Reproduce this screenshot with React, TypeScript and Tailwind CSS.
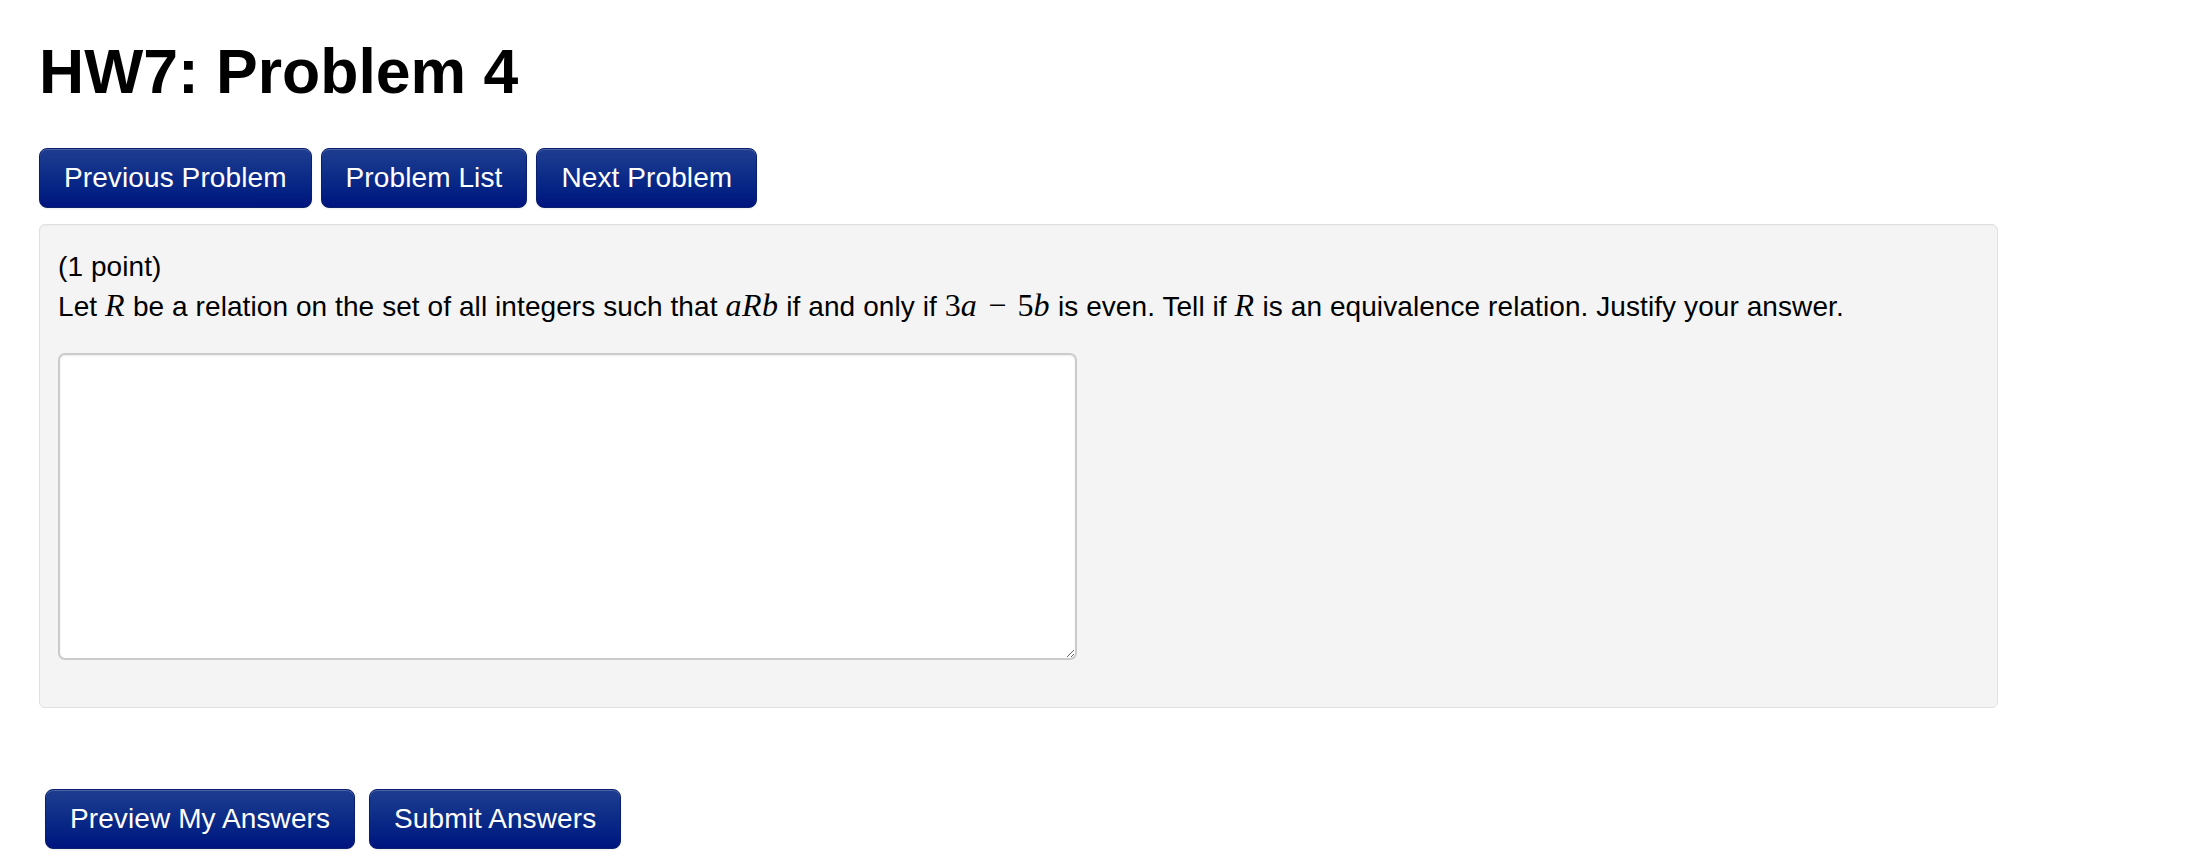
import React from 'react';

const btn =
  'rounded-[8px] border border-[#0b1f6e] bg-gradient-to-b from-[#1e3d90] to-[#00137f] px-6 py-[9px] text-[28px] leading-[40px] tracking-[0.1px] text-white shadow-[inset_0_1px_0_rgba(255,255,255,0.2),0_1px_2px_rgba(0,0,0,0.08)]';

function M({ children }: { children: React.ReactNode }) {
  return <span className="font-['Liberation_Serif',serif] text-[32px] italic tracking-[0.5px]">{children}</span>;
}

function N({ children }: { children: React.ReactNode }) {
  return <span className="font-['Liberation_Serif',serif] text-[32px]">{children}</span>;
}

export default function App() {
  return (
    <div className="min-h-screen bg-white pl-[39px] font-['Liberation_Sans',Arial,sans-serif] text-black">
      <h1 className="mt-[35px] text-[62.5px] font-bold leading-[72px]">HW7: Problem 4</h1>

      <div className="mt-[41px] flex gap-[9px]">
        <button className={btn}>Previous Problem</button>
        <button className={btn}>Problem List</button>
        <button className={btn}>Next Problem</button>
      </div>

      <div className="mt-[16px] w-[1959px] rounded-[6px] border border-[#e0e0e0] bg-[#f4f4f4] px-[18px] pb-[47px] pt-[23px] shadow-[inset_0_1px_1px_rgba(0,0,0,0.03)]">
        <div className="text-[28px] leading-[38px] tracking-[0.08px]">
          <div>(1 point)</div>
          <div>
            Let <M>R</M> be a relation on the set of all integers such that <M>aRb</M> if and only if{' '}
            <N>3</N>
            <M>a</M>
            <N>
              <span className="mx-[11px]">−</span>5
            </N>
            <M>b</M> is even. Tell if <M>R</M> is an equivalence relation. Justify your answer.
          </div>
        </div>
        <textarea className="mt-[27px] block h-[307px] w-[1019px] rounded-[7px] border-2 border-[#cbcbcb] bg-white shadow-[inset_0_1px_2px_rgba(0,0,0,0.08)] outline-none" />
      </div>

      <div className="ml-[6px] mt-[81px] flex gap-[14px]">
        <button className={btn}>Preview My Answers</button>
        <button className={btn}>Submit Answers</button>
      </div>
    </div>
  );
}
